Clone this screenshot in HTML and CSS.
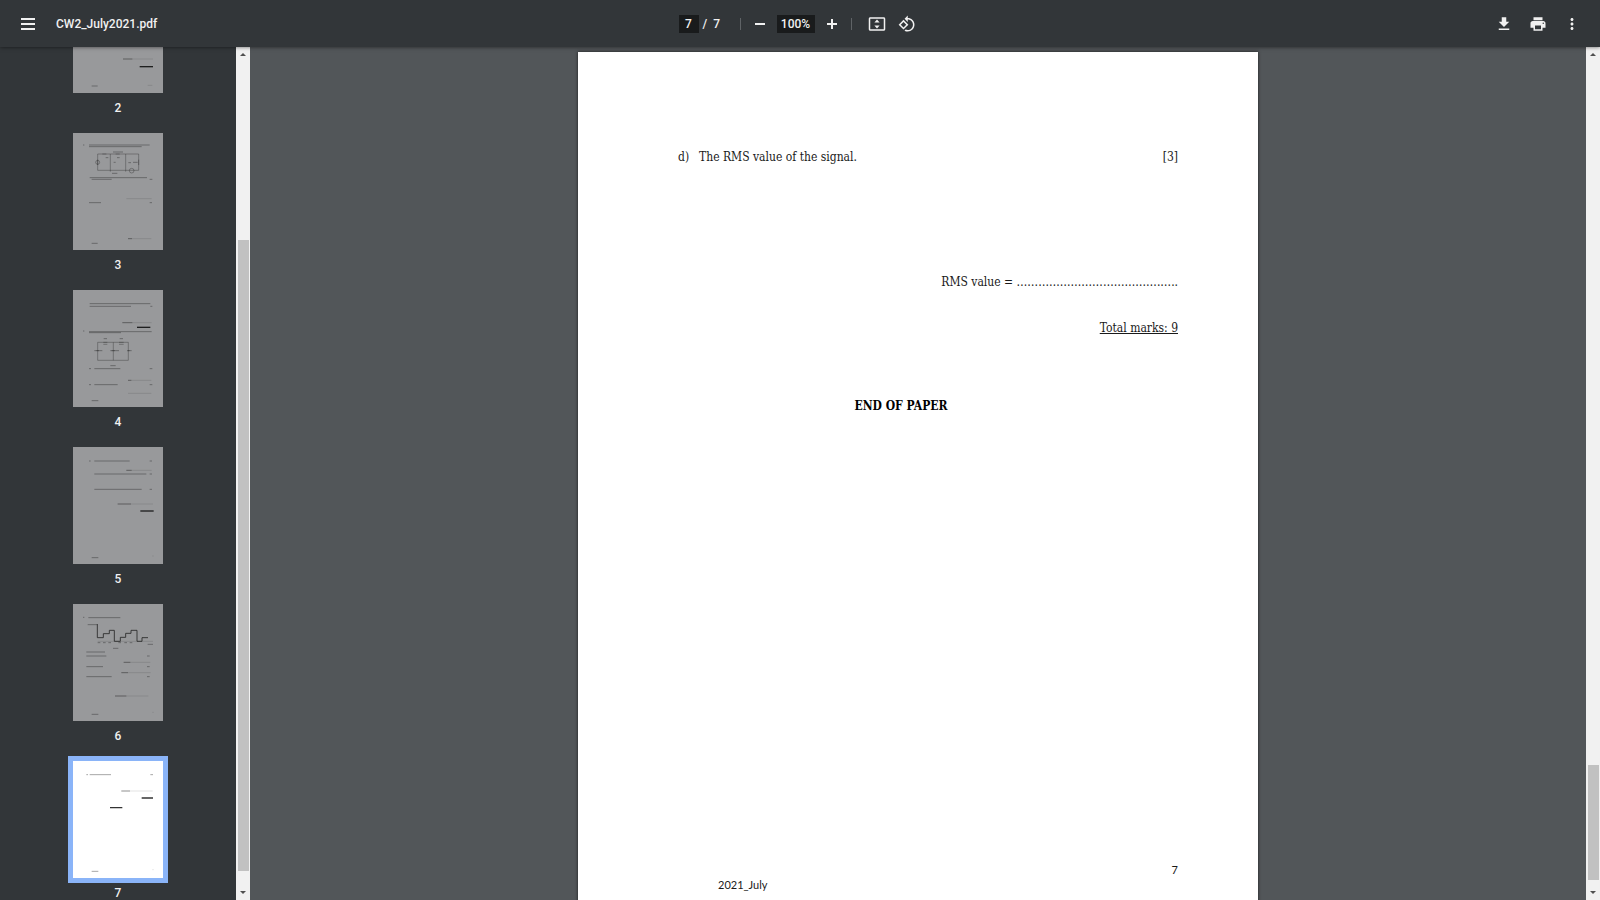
FILE: index.html
```html
<!DOCTYPE html>
<html lang="en">
<head>
    <meta charset="UTF-8">
    <title>CW2_July2021.pdf</title>
    <link rel="stylesheet" href="styles.css">
</head>
<body>
    <!-- TOOLBAR -->
    <header class="toolbar">
        <div class="toolbar-start">
            <button class="icon-btn" aria-label="Menu">
                <svg width="18" height="18" viewBox="0 0 18 18"><path d="M2 3h14v2H2zM2 8h14v2H2zM2 13h14v2H2z"/></svg>
            </button>
            <h1 class="file-name">CW2_July2021.pdf</h1>
        </div>

        <div class="toolbar-center">
            <input class="page-input" type="text" value="7" aria-label="Page number">
            <span class="page-count">/&nbsp; 7</span>
            <span class="divider"></span>
            <button class="tool-btn" aria-label="Zoom out">
                <svg width="18" height="18" viewBox="0 0 18 18"><path d="M4 8h10v2H4z"/></svg>
            </button>
            <input class="zoom-input" type="text" value="100%" aria-label="Zoom level">
            <button class="tool-btn" aria-label="Zoom in">
                <svg width="18" height="18" viewBox="0 0 18 18"><path d="M8 4h2v4h4v2h-4v4H8v-4H4V8h4z"/></svg>
            </button>
            <span class="divider"></span>
            <div class="view-tools">
                <button class="tool-btn" aria-label="Fit to page">
                    <svg width="18" height="18" viewBox="0 0 24 24"><path d="M21 3H3c-1.1 0-2 .9-2 2v14c0 1.1.9 2 2 2h18c1.1 0 2-.9 2-2V5c0-1.1-.9-2-2-2zm0 16H3V5h18zM12 6l-3.500 4h7zM12 18l3.500-4h-7z"/></svg>
                </button>
                <button class="tool-btn" aria-label="Rotate counterclockwise">
                    <svg width="18" height="18" viewBox="0 0 24 24"><path d="M7.340 6.410L.86 12.900l6.490 6.480 6.490-6.480-6.500-6.490zM3.690 12.900l3.660-3.660L11 12.900l-3.660 3.660-3.650-3.660zm15.670-6.260C17.610 4.880 15.300 4 13 4V.76L8.760 5 13 9.240V6c1.790 0 3.580.68 4.950 2.050 2.730 2.730 2.730 7.170 0 9.900C16.580 19.320 14.790 20 13 20c-.97 0-1.940-.21-2.840-.61l-1.490 1.490C10.020 21.620 11.510 22 13 22c2.300 0 4.610-.88 6.360-2.640 3.520-3.510 3.520-9.210 0-12.720z"/></svg>
                </button>
            </div>
        </div>

        <div class="toolbar-end">
            <button class="icon-btn" aria-label="Download">
                <svg width="18" height="18" viewBox="0 0 24 24"><path d="M19 9h-4V3H9v6H5l7 7 7-7zM5 18v2h14v-2H5z"/></svg>
            </button>
            <button class="icon-btn" aria-label="Print">
                <svg width="18" height="18" viewBox="0 0 24 24"><path d="M19 8H5c-1.660 0-3 1.340-3 3v6h4v4h12v-4h4v-6c0-1.660-1.340-3-3-3zm-3 11H8v-5h8v5zm3-7c-.55 0-1-.45-1-1s.45-1 1-1 1 .45 1 1-.45 1-1 1zm-1-9H6v4h12V3z"/></svg>
            </button>
            <button class="icon-btn" aria-label="More actions">
                <svg width="18" height="18" viewBox="0 0 24 24"><path d="M12 8c1.100 0 2-.9 2-2s-.9-2-2-2-2 .9-2 2 .9 2 2 2zm0 2c-1.100 0-2 .9-2 2s.9 2 2 2 2-.9 2-2-.9-2-2-2zm0 6c-1.100 0-2 .9-2 2s.9 2 2 2 2-.9 2-2-.9-2-2-2z"/></svg>
            </button>
        </div>
    </header>

    <div class="viewer">
        <!-- THUMBNAILS -->
        <nav class="thumbs" aria-label="Pages">
            <a class="thumb" href="#page2">
                <svg class="thumb-page cut" viewBox="0 213 270 138">
                    <path class="faint" d="M150 249h90M224 328h14"/>
                    <path class="ink" d="M150 249h28M56 330h18"/>
                    <path class="heavy" d="M200 272h40"/>
                </svg>
                <span class="thumb-num">2</span>
            </a>
            <a class="thumb" href="#page3">
                <svg class="thumb-page" viewBox="0 0 270 351">
                    <path class="ink" d="M30 36h4M48 36h182M48 41h158M50 134h172M56 139h60M230 139h8M48 209h36M230 209h7M165 317h12M56 331h18M117 121h16M120 57h30M98 74h8M132 74h8M122 88h6M166 89h8M180 88h14"/>
                    <path class="faint" d="M160 197h76M165 317h70"/>
                    <path class="wire" d="M74 63H197V112H74zM112 63v53M158 63v53M88 63h12M128 63h12M74 80v16M197 80v16"/>
                    <circle class="wire" cx="74" cy="88" r="6"/>
                    <circle class="wire" cx="176" cy="113" r="7"/>
                </svg>
                <span class="thumb-num">3</span>
            </a>
            <a class="thumb" href="#page4">
                <svg class="thumb-page" viewBox="0 0 270 351">
                    <path class="ink" d="M50 41h182M50 49h124M232 49h6M148 98h30M30 123h4M48 125h188M48 128h96M112 227h16M48 236h6M64 236h78M230 236h8M48 284h6M64 284h70M230 284h8M165 271h10M56 332h20M92 146h10M140 146h10M64 182h24M112 182h26M164 182h12"/>
                    <path class="faint" d="M148 98h88M165 271h70M165 310h70"/>
                    <path class="heavy" d="M192 112h40"/>
                    <path class="wire" d="M74 157h92v54H74zM121 157v54M91 157h12M138 157h14M91 163h12M138 163h14M70 182h8M116 182h10M162 182h8"/>
                </svg>
                <span class="thumb-num">4</span>
            </a>
            <a class="thumb" href="#page5">
                <svg class="thumb-page" viewBox="0 0 270 351">
                    <path class="ink" d="M48 42h5M64 42h106M230 42h7M160 70h16M64 81h156M230 81h7M64 127h142M230 127h7M134 171h40M56 332h20"/>
                    <path class="faint" d="M160 70h76M134 171h106M238 327h4"/>
                    <path class="heavy" d="M202 192h40"/>
                </svg>
                <span class="thumb-num">5</span>
            </a>
            <a class="thumb" href="#page6">
                <svg class="thumb-page" viewBox="0 0 270 351">
                    <path class="ink" d="M30 40h4M46 41h96M44 62h28M120 133h16M40 144h56M40 156h60M222 156h8M152 175h20M40 188h50M222 188h8M145 206h20M40 218h76M222 218h8M126 276h34M56 331h20M74 116h8M90 116h8M106 116h8M136 116h8M154 116h8M170 116h8M224 121h16"/>
                    <path class="faint" d="M74 112h166M152 175h80M145 206h88M126 276h100M238 325h4"/>
                    <path class="wire plot" d="M73 60v41M73 101h18V89h18V79h15v33h18v-12h16V88h16V79h18v33h15v-11h18"/>
                </svg>
                <span class="thumb-num">6</span>
            </a>
            <a class="thumb" href="#page7">
                <svg class="thumb-page current" viewBox="0 0 270 351">
                    <path class="ink" d="M40 41h5M50 41h64M232 41h8M145 90h26M56 331h20"/>
                    <path class="faint" d="M145 90h94M238 326h4"/>
                    <path class="heavy" d="M206 111h34M111 140h37"/>
                </svg>
                <span class="thumb-num">7</span>
            </a>
        </nav>
        <div class="scrollbar">
            <span class="arrow up"></span>
            <div class="track side"><div class="handle"></div></div>
            <span class="arrow down"></span>
        </div>

        <!-- DOCUMENT -->
        <main class="document">
            <article class="page" id="page7">
                <div class="question">
                    <span class="letter">d)</span>
                    <span class="question-text">The RMS value of the signal.</span>
                    <span>[3]</span>
                </div>
                <p class="answer">RMS value = ………………………………….…..</p>
                <p class="total">Total marks: 9</p>
                <p class="end">END OF PAPER</p>
                <footer class="page-footer">
                    <div class="folio">7</div>
                    <div class="session">2021_July</div>
                </footer>
            </article>
        </main>
        <div class="scrollbar">
            <span class="arrow up"></span>
            <div class="track main"><div class="handle"></div></div>
            <span class="arrow down"></span>
        </div>
    </div>
</body>
</html>
```

FILE: styles.css
```css
:root {
    --toolbar-color: #323639;
    --backdrop-color: #525659;
    --text-color: #f1f1f1;
    --accent-color: #8ab4f8;
}

* {
    box-sizing: border-box;
}

body {
    margin: 0;
    height: 100vh;
    display: flex;
    flex-direction: column;
    overflow: hidden;
    font-family: Roboto, sans-serif;
    font-size: 12px;
    background: var(--backdrop-color);
    color: var(--text-color);
}

/* TOOLBAR */
.toolbar {
    flex: none;
    height: 47px;
    display: grid;
    grid-template-columns: 1fr auto 1fr;
    align-items: center;
    padding: 0 16px;
    background: var(--toolbar-color);
    box-shadow: 0 0 4px rgba(0, 0, 0, 0.6);
    z-index: 1;
}

.toolbar-start,
.toolbar-center,
.toolbar-end {
    display: flex;
    align-items: center;
}

.toolbar-start {
    gap: 16px;
}

.toolbar-end {
    justify-content: flex-end;
    gap: 10px;
}

.file-name {
    margin: 0;
    font-size: 12px;
    font-weight: 500;
}

.icon-btn,
.tool-btn {
    display: flex;
    align-items: center;
    justify-content: center;
    width: 24px;
    height: 30px;
    padding: 0;
    border: none;
    background: none;
    cursor: pointer;
}

.tool-btn {
    width: 30px;
}

.view-tools {
    display: flex;
    margin-left: 6px;
}

.toolbar svg {
    fill: var(--text-color);
}

.page-input,
.zoom-input {
    height: 18px;
    padding: 0;
    border: none;
    background: #191b1c;
    color: var(--text-color);
    font-family: inherit;
    font-size: 12px;
    font-weight: 500;
    text-align: center;
}

.page-input {
    width: 20px;
}

.zoom-input {
    width: 38px;
    margin: 0 2px;
}

.page-count {
    width: 37px;
    padding-left: 4px;
    font-weight: 500;
}

.divider {
    width: 1px;
    height: 12px;
    margin: 0 4px;
    background: #5f6366;
}

/* THUMBNAILS */
.viewer {
    flex: 1;
    min-height: 0;
    display: flex;
}

.thumbs {
    flex: none;
    width: 236px;
    display: flex;
    flex-direction: column;
    align-items: center;
    gap: 10px;
    overflow: hidden;
    background: var(--toolbar-color);
}

.thumb {
    flex: none;
    color: var(--text-color);
    text-decoration: none;
    text-align: center;
}

.thumb-page {
    display: block;
    width: 90px;
    height: 117px;
    background: #98999b;
}

.thumb-page.cut {
    height: 46px;
}

.thumb-page.current {
    background: white;
    outline: 5px solid var(--accent-color);
}

.thumb-num {
    display: block;
    line-height: 30px;
    font-weight: 500;
}

.ink,
.faint,
.heavy,
.wire {
    fill: none;
    stroke: #222;
}

.ink {
    stroke-width: 3;
    opacity: 0.4;
}

.faint {
    stroke-width: 2;
    opacity: 0.2;
}

.heavy {
    stroke-width: 4;
    stroke: black;
    opacity: 0.8;
}

.wire {
    stroke-width: 2;
    opacity: 0.5;
}

.plot {
    stroke-width: 3;
    opacity: 0.8;
}

/* SCROLLBARS */
.scrollbar {
    flex: none;
    width: 14px;
    display: flex;
    flex-direction: column;
    align-items: center;
    background: #f1f1f1;
}

.arrow {
    flex: none;
    height: 15px;
    display: flex;
    align-items: center;
}

.arrow::before {
    content: "";
    border: 3px solid transparent;
}

.arrow.up::before {
    border-top: none;
    border-bottom-color: #505050;
}

.arrow.down::before {
    border-bottom: none;
    border-top-color: #505050;
}

.track {
    flex: 1;
    width: 11px;
    display: flex;
    flex-direction: column;
    justify-content: flex-end;
    padding-bottom: 14px;
}

.handle {
    background: #c1c1c1;
}

.side .handle {
    height: 78%;
}

.main .handle {
    height: 14%;
}

.track.main {
    padding-bottom: 5px;
}

/* DOCUMENT */
.document {
    flex: 1;
    min-width: 0;
    padding-top: 5px;
    overflow: hidden;
}

.page {
    width: 680px;
    margin: 0 auto;
    padding: 95px 80px 40px 46px;
    background: white;
    color: #1a1a1a;
    box-shadow: 0 0 3px rgba(0, 0, 0, 0.7);
    font-family: "DejaVu Serif Condensed", "Liberation Serif", serif;
    font-size: 12px;
    line-height: 20px;
}

.page p {
    margin: 0;
}

.question {
    display: flex;
    padding-left: 54px;
}

.letter {
    width: 21px;
}

.question-text {
    flex: 1;
}

.page .answer {
    margin-top: 105px;
    text-align: right;
}

.page .total {
    margin-top: 26px;
    text-align: right;
    text-decoration: underline;
}

.page .end {
    margin-top: 58px;
    text-align: center;
    font-weight: 700;
    color: black;
}

.page-footer {
    margin-top: 446px;
    font-family: Lato, sans-serif;
    font-size: 11px;
    line-height: 15px;
}

.folio {
    text-align: right;
}

.session {
    padding-left: 94px;
}
```
